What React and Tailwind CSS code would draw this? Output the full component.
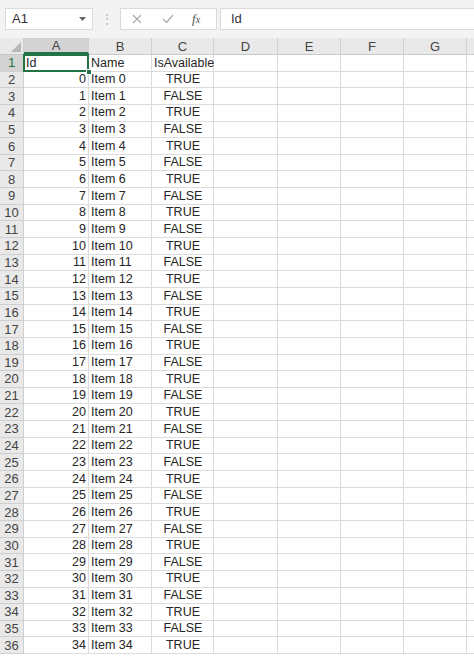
import React from "react";

const cols = [
  { key: "A", w: "w-[65px]" },
  { key: "B", w: "w-[63px]" },
  { key: "C", w: "w-[62px]" },
  { key: "D", w: "w-[64px]" },
  { key: "E", w: "w-[63px]" },
  { key: "F", w: "w-[63px]" },
  { key: "G", w: "w-[63px]" },
];

const rows = Array.from({ length: 35 }, (_, i) => ({
  id: i,
  name: `Item ${i}`,
  ok: i % 2 === 0 ? "TRUE" : "FALSE",
}));

function FormulaBar() {
  return (
    <div className="flex items-center h-[38px] bg-[#f3f3f3] pl-[5px] pb-[2px] pt-[1px]">
      <div className="flex items-center justify-between w-[88px] h-[22px] bg-white border border-[#dadada] pl-[6px] pr-[6px] text-[13px] text-[#333]">
        <span>A1</span>
        <svg width="7" height="4" viewBox="0 0 7 4">
          <path d="M0 0 L7 0 L3.5 4 Z" fill="#666" />
        </svg>
      </div>
      <div className="w-[27px] flex justify-center text-[#b5b5b5] text-[12px]">⋮</div>
      <div className="flex items-center w-[97px] h-[22px] bg-white border border-[#dadada]">
        <svg className="ml-[11px]" width="10" height="10" viewBox="0 0 10 10">
          <path d="M1 1 L9 9 M9 1 L1 9" stroke="#aaa" strokeWidth="1.1" />
        </svg>
        <svg className="ml-[20px]" width="12" height="10" viewBox="0 0 12 10">
          <path d="M1 5 L4.5 8.5 L11 1" stroke="#aaa" strokeWidth="1.2" fill="none" />
        </svg>
        <span className="ml-[18px] text-[13px] italic text-[#555] font-['Liberation_Serif',serif]">
          f<span className="text-[10px]">x</span>
        </span>
      </div>
      <div className="flex items-center flex-1 h-[22px] ml-[3px] bg-white border border-[#dadada] border-r-0 pl-[10px] text-[13px] text-[#333]">
        Id
      </div>
    </div>
  );
}

function HeaderRow() {
  return (
    <div className="flex h-[17px] bg-[#e9e9e9] border-b border-[#c9c9c9] text-[13px] text-[#444]">
      <div className="relative w-[24px] shrink-0 border-r border-[#d0d0d0]">
        <svg className="absolute right-[2px] bottom-[2px]" width="10" height="10" viewBox="0 0 10 10">
          <path d="M10 0 L10 10 L0 10 Z" fill="#b8b8b8" />
        </svg>
      </div>
      {cols.map((c) => (
        <div
          key={c.key}
          className={`${c.w} shrink-0 flex items-center justify-center border-r border-[#d0d0d0] leading-none ${
            c.key === "A" ? "bg-[#d3d3d3] border-b-2 border-b-[#217346]" : ""
          }`}
        >
          {c.key}
        </div>
      ))}
      <div className="flex-1" />
    </div>
  );
}

function Cell({ w, align = "left", children, className = "" }) {
  const a = align === "right" ? "justify-end pr-[2px]" : align === "center" ? "justify-center" : "justify-start pl-[2px]";
  return (
    <div className={`${w} shrink-0 flex items-center ${a} border-r border-b border-[#dcdcdc] whitespace-nowrap ${className}`}>
      {children}
    </div>
  );
}

function Row({ n, cells, selected }) {
  return (
    <div className="flex h-[16.65px] text-[12.5px] text-[#262626] leading-none">
      <div
        className={`w-[24px] shrink-0 flex items-center justify-center border-r border-b border-[#cfcfcf] text-[13px] ${
          selected ? "bg-[#d3d3d3] text-[#217346]" : "bg-[#e9e9e9] text-[#444]"
        }`}
      >
        {n}
      </div>
      <Cell w="w-[65px]" align={cells[0].align} className={selected ? "relative" : ""}>
        {cells[0].v}
        {selected && (
          <>
            <div className="absolute inset-[-1px] border-2 border-[#217346] pointer-events-none" />
            <div className="absolute right-[-4px] bottom-[-4px] w-[6px] h-[6px] bg-[#217346] border border-white z-10" />
          </>
        )}
      </Cell>
      <Cell w="w-[63px]">{cells[1].v}</Cell>
      <Cell w="w-[62px]" align={cells[2].align} className="pl-[1px]">{cells[2].v}</Cell>
      <Cell w="w-[64px]" />
      <Cell w="w-[63px]" />
      <Cell w="w-[63px]" />
      <Cell w="w-[63px]" />
      <div className="flex-1 border-b border-[#dcdcdc]" />
    </div>
  );
}

export default function App() {
  return (
    <div className="w-[474px] h-[656px] overflow-hidden bg-white font-['Liberation_Sans',Arial,sans-serif]">
      <FormulaBar />
      <HeaderRow />
      <Row n={1} selected cells={[{ v: "Id" }, { v: "Name" }, { v: "IsAvailable", align: "left" }]} />
      {rows.map((r, i) => (
        <Row
          key={r.id}
          n={i + 2}
          cells={[
            { v: r.id, align: "right" },
            { v: r.name },
            { v: r.ok, align: "center" },
          ]}
        />
      ))}
    </div>
  );
}
